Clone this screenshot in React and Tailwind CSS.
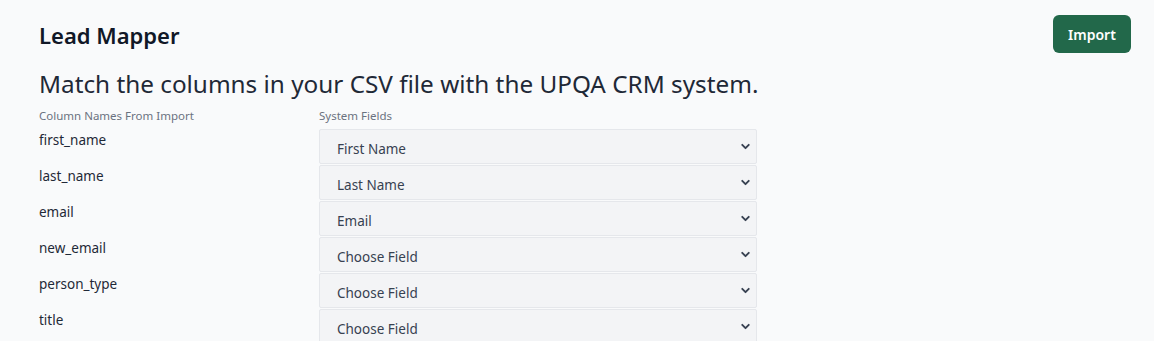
import { ChevronDown } from 'lucide-react';

const rows = [
  { name: 'first_name', value: 'First Name' },
  { name: 'last_name', value: 'Last Name' },
  { name: 'email', value: 'Email' },
  { name: 'new_email', value: 'Choose Field' },
  { name: 'person_type', value: 'Choose Field' },
  { name: 'title', value: 'Choose Field' },
];

export default function App() {
  return (
    <div className="min-h-[341px] bg-[#f9fafb] text-[#1f2937] overflow-hidden" style={{ fontFamily: '"Segoe UI", "Noto Sans", sans-serif' }}>
      <div className="pl-[39px] pr-[23px] pt-[15px]">
        {/* Header */}
        <div className="flex items-start justify-between h-[38px]">
          <h1 className="mt-[6px] text-[22px] leading-[28px] font-semibold text-[#111827]">Lead Mapper</h1>
          <button className="h-[38px] w-[78px] rounded-md bg-[#22684a] text-white text-[14px] font-semibold">Import</button>
        </div>

        <p className="mt-[15px] text-[24.3px] leading-[32px] text-[#1f2937]">
          Match the columns in your CSV file with the UPQA CRM system.
        </p>

        {/* Column headings */}
        <div className="mt-[8px] flex text-[11.5px] leading-[16px] text-[#6b7280]">
          <div className="w-[280px]">Column Names From Import</div>
          <div>System Fields</div>
        </div>

        {/* Rows */}
        <div className="mt-[5px] flex flex-col gap-px">
          {rows.map(r => (
            <div key={r.name} className="flex h-[35px]">
              <div className="w-[280px] pt-[1px] text-[13.5px] leading-[20px] text-[#1f2937]">{r.name}</div>
              <div className="relative w-[438px] h-[35px] bg-[#f3f4f6] border border-[#e5e7eb] rounded-[2px]">
                <span className="absolute left-[17px] top-[9px] text-[13.5px] leading-[20px] text-[#374151]">{r.value}</span>
                <ChevronDown className="absolute right-[4px] top-[10px] w-[13px] h-[13px] text-[#374151]" strokeWidth={3.5} />
              </div>
            </div>
          ))}
        </div>
      </div>
    </div>
  );
}
